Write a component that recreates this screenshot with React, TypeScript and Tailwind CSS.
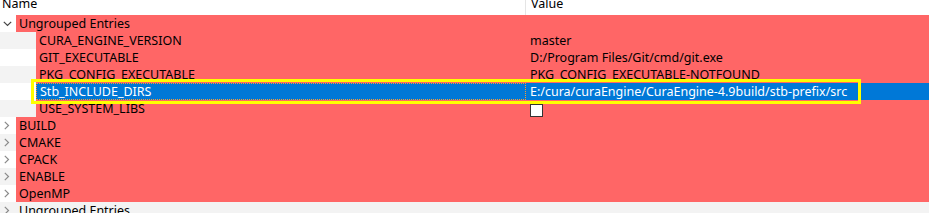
import React from "react";

type Row = {
  kind: "group" | "child";
  name: string;
  value?: string;
  expanded?: boolean;
  selected?: boolean;
  checkbox?: boolean;
  plain?: boolean;
};

const rows: Row[] = [
  { kind: "group", name: "Ungrouped Entries", expanded: true },
  { kind: "child", name: "CURA_ENGINE_VERSION", value: "master" },
  { kind: "child", name: "GIT_EXECUTABLE", value: "D:/Program Files/Git/cmd/git.exe" },
  { kind: "child", name: "PKG_CONFIG_EXECUTABLE", value: "PKG_CONFIG_EXECUTABLE-NOTFOUND" },
  {
    kind: "child",
    name: "Stb_INCLUDE_DIRS",
    value: "E:/cura/curaEngine/CuraEngine-4.9build/stb-prefix/src",
    selected: true,
  },
  { kind: "child", name: "USE_SYSTEM_LIBS", checkbox: true },
  { kind: "group", name: "BUILD" },
  { kind: "group", name: "CMAKE" },
  { kind: "group", name: "CPACK" },
  { kind: "group", name: "ENABLE" },
  { kind: "group", name: "OpenMP" },
  { kind: "group", name: "Ungrouped Entries", plain: true },
];

function ChevronDown() {
  return (
    <svg width="9" height="6" viewBox="0 0 9 6" className="ml-[3px]">
      <path d="M0.8 0.8 L4.5 4.5 L8.2 0.8" fill="none" stroke="#444" strokeWidth="1.2" />
    </svg>
  );
}

function ChevronRight() {
  return (
    <svg width="6" height="9" viewBox="0 0 6 9" className="ml-[4px]">
      <path d="M0.8 0.8 L4.5 4.5 L0.8 8.2" fill="none" stroke="#8a8a8a" strokeWidth="1.2" />
    </svg>
  );
}

function TreeRow({ row, index }: { row: Row; index: number }) {
  const alt = index % 2 === 1;
  const gutterBg = alt ? "bg-[#f3f3f3]" : "bg-white";
  const isGroup = row.kind === "group";
  const bodyBg = row.selected
    ? "bg-[#0078d7] text-white"
    : row.plain
    ? "bg-[#f3f3f3] text-black"
    : "bg-[#ff6666] text-black";
  return (
    <div className={`flex h-[17px] ${row.plain ? "bg-[#f3f3f3]" : ""}`}>
      <div
        className={`flex shrink-0 items-center ${isGroup ? "w-[16px]" : "w-[36px]"} ${gutterBg}`}
      >
        {isGroup ? row.expanded ? <ChevronDown /> : <ChevronRight /> : null}
      </div>
      <div className={`flex flex-1 ${bodyBg}`}>
        <div
          className={`flex shrink-0 items-center pl-[3px] pt-[2px] ${isGroup ? "w-[510px]" : "w-[490px]"} ${
            row.selected ? "border border-dotted border-[#ff9a2e]" : ""
          }`}
        >
          {row.name}
        </div>
        <div className="flex flex-1 items-center pl-[4px] pt-[2px]">
          {row.checkbox ? (
            <div className="mt-[2px] h-[13px] w-[13px] border border-[#333] bg-white" />
          ) : (
            row.value
          )}
        </div>
      </div>
    </div>
  );
}

export default function App() {
  return (
    <div
      className="relative h-[213px] w-[929px] overflow-hidden bg-white text-[12.5px] leading-none text-black"
      style={{ fontFamily: '"Segoe UI", "Noto Sans", "Open Sans", sans-serif' }}
    >
      <div className="flex h-[15px] bg-white">
        <div className="flex w-[526px] shrink-0 items-end pl-[2px] pb-[5px] border-r border-[#e5e5e5]">
          Name
        </div>
        <div className="flex flex-1 items-end pl-[5px] pb-[5px]">Value</div>
      </div>
      {rows.map((r, i) => (
        <TreeRow key={i} row={r} index={i} />
      ))}
      <div className="pointer-events-none absolute left-[31px] top-[79px] h-[25px] w-[830px] border-[3px] border-[#ffff00]" />
    </div>
  );
}
